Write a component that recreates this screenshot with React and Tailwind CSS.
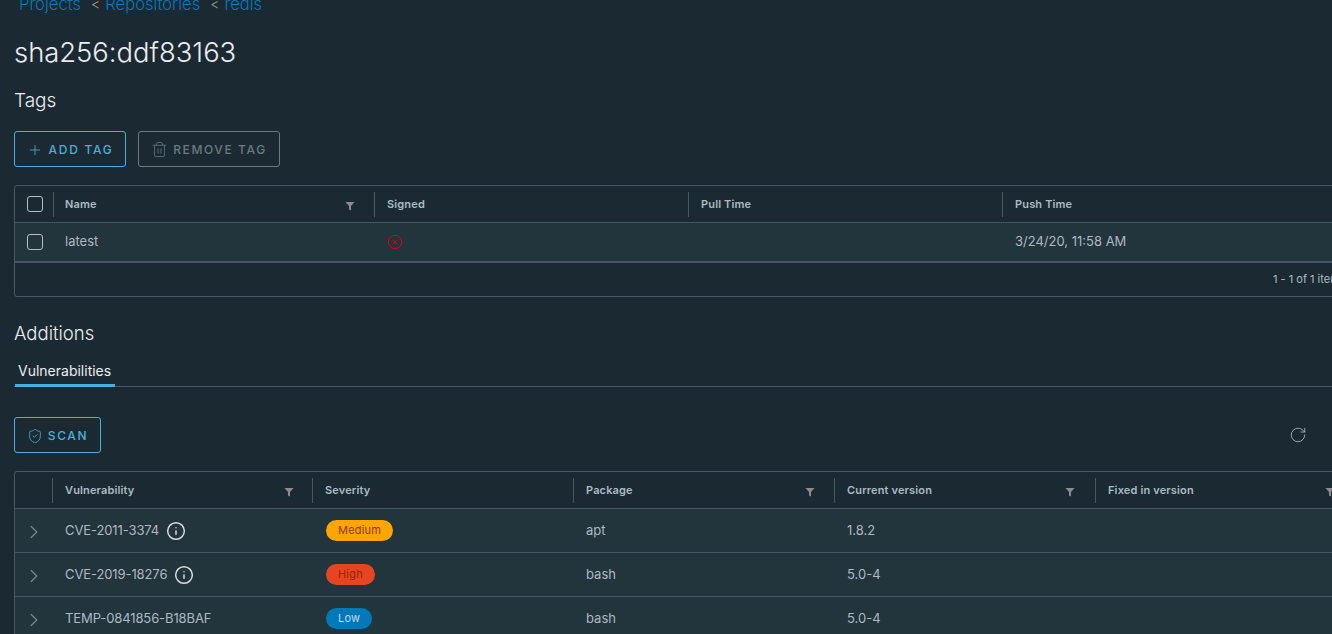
import React from "react";
import { Plus, Trash2, ShieldCheck, RotateCw, Info, CircleX, ChevronRight } from "lucide-react";

const Filter = () => (
  <svg width="10" height="10" viewBox="0 0 10 10" className="shrink-0">
    <path d="M0.5 1h9L6 5v4.5L4 8.5V5z" fill="#8c8c8c" />
  </svg>
);

const Box = () => <span className="block w-4 h-4 rounded-[3px] border border-[#b3bfc6]" />;

const HeadCell = ({ w, label, filter, pad = "pl-[12px] pr-[19px]" }) => (
  <div className={`${w} shrink-0 h-full flex items-center`}>
    <span className="w-px h-[25px] bg-[#485764] shrink-0" />
    <div className={`flex-1 flex items-center justify-between ${pad}`}>
      <span className="text-[11px] font-semibold tracking-[0.15px] text-[#acbac3]">{label}</span>
      {filter && <span className="mt-[3px]"><Filter /></span>}
    </div>
  </div>
);

const Badge = ({ cls, children }) => (
  <span className={`inline-flex items-center h-[21px] px-[12px] rounded-full text-[11px] tracking-[0.2px] ${cls}`}>{children}</span>
);

const vulns = [
  { id: "CVE-2011-3374", info: true, pkg: "apt", ver: "1.8.2", sev: "Medium", cls: "bg-[#ffa500] text-[#8a3a00]" },
  { id: "CVE-2019-18276", info: true, pkg: "bash", ver: "5.0-4", sev: "High", cls: "bg-[#e64524] text-[#a32100]" },
  { id: "TEMP-0841856-B18BAF", info: false, pkg: "bash", ver: "5.0-4", sev: "Low", cls: "bg-[#0079b8] text-[#c8dbe6]" },
];

export default function App() {
  return (
    <div className="w-[1332px] h-[634px] overflow-hidden bg-[#1b2a32] pl-[14px] text-[#acbac3]" style={{ fontFamily: "Inter, 'Noto Sans', sans-serif" }}>
      <div className="-mt-[6px] h-[20px] flex items-center pl-[5px] text-[16.6px] font-light leading-[20px]">
        <span className="text-[#0079b8]">Projects</span>
        <span className="ml-[10px] mr-[5px] text-[14px] text-[#8c9ba5]">&lt;</span>
        <span className="text-[#0079b8]">Repositories</span>
        <span className="ml-[10px] mr-[5px] text-[14px] text-[#8c9ba5]">&lt;</span>
        <span className="text-[#0079b8]">redis</span>
      </div>

      <h1 className="mt-[21px] h-[34px] text-[27.4px] leading-[34px] font-light text-[#eaedf0]">sha256:ddf83163</h1>
      <h2 className="mt-[20px] h-[24px] text-[19px] leading-[24px] font-light text-[#eaedf0]">Tags</h2>

      <div className="mt-[18px] flex gap-[12px]">
        <button className="h-[36px] w-[112px] pt-[1px] flex items-center justify-center gap-[6px] rounded-[3px] border border-[#49afd9] text-[#49afd9] text-[12px] font-medium tracking-[1.7px]">
          <Plus size={16} strokeWidth={1.25} />
          ADD TAG
        </button>
        <button className="h-[36px] w-[142px] pt-[1px] flex items-center justify-center gap-[5px] rounded-[3px] border border-[#6a7a81] text-[#6a7a81] text-[12px] font-medium tracking-[1.6px]">
          <Trash2 size={17} strokeWidth={1.1} />
          REMOVE TAG
        </button>
      </div>

      <div className="mt-[18px] w-[1340px] rounded-[3px] border border-[#485764]">
        <div className="h-[37px] flex items-center border-b border-[#485764]">
          <div className="w-[38px] shrink-0 flex justify-center pl-[2px]"><Box /></div>
          <HeadCell w="w-[321px]" label="Name" filter pad="pl-[11px] pr-[19px]" />
          <HeadCell w="w-[314px]" label="Signed" />
          <HeadCell w="w-[314px]" label="Pull Time" />
          <HeadCell w="w-[330px]" label="Push Time" />
        </div>
        <div className="h-[40px] flex items-center bg-[#22343c] border-b-2 border-[#485764] text-[13px]">
          <div className="w-[38px] shrink-0 flex justify-center pl-[2px]"><Box /></div>
          <div className="w-[321px] shrink-0 pl-[12px]">latest</div>
          <div className="w-[314px] shrink-0 pl-[13px]"><CircleX size={16} strokeWidth={1.5} className="text-[#e1000f]" /></div>
          <div className="w-[314px] shrink-0" />
          <div className="pl-[13px]">3/24/20, 11:58 AM</div>
        </div>
        <div className="h-[33px] flex items-center pl-[1258px] text-[11px] whitespace-nowrap">1 - 1 of 1 items</div>
      </div>

      <h2 className="mt-[24px] h-[24px] text-[18.5px] leading-[24px] font-light text-[#eaedf0]">Additions</h2>

      <div className="mt-[15px] w-[1318px] h-[27px] border-b border-[#485764] flex items-stretch">
        <div className="ml-[1px] w-[100px] h-[27px] border-b-[3px] border-[#49afd9] pl-[3px] text-[14px] leading-[22px] text-[#eaedf0]">Vulnerabilities</div>
      </div>

      <div className="mt-[30px] h-[36px] w-[1318px] flex items-center justify-between pr-[25px]">
        <button className="h-[36px] w-[87px] pt-[1px] flex items-center justify-center gap-[5px] rounded-[3px] border border-[#49afd9] text-[#49afd9] text-[12px] font-medium tracking-[1.6px]">
          <ShieldCheck size={16} strokeWidth={1.25} />
          SCAN
        </button>
        <RotateCw size={18} strokeWidth={1.1} className="text-[#b3bfc6]" />
      </div>

      <div className="mt-[18px] w-[1340px] rounded-[3px] border border-[#485764]">
        <div className="h-[37px] flex items-center border-b border-[#485764]">
          <div className="w-[37px] shrink-0" />
          <HeadCell w="w-[260px]" label="Vulnerability" filter pad="pl-[12px] pr-[18px]" />
          <HeadCell w="w-[261px]" label="Severity" filter={false} />
          <HeadCell w="w-[261px]" label="Package" filter />
          <HeadCell w="w-[261px]" label="Current version" filter pad="pl-[12px] pr-[20px]" />
          <HeadCell w="w-[259px]" label="Fixed in version" filter />
        </div>
        {vulns.map((v) => (
          <div key={v.id} className="h-[44px] flex items-center bg-[#22343c] border-b border-[#485764] text-[13px]">
            <div className="w-[37px] shrink-0 flex justify-center pt-[2px]"><ChevronRight size={22} strokeWidth={1.4} className="text-[#76858e]" /></div>
            <div className="w-[260px] shrink-0 pl-[13px] flex items-center gap-[7px]">
              <span className="tracking-[-0.1px]">{v.id}</span>
              {v.info && <Info size={20} strokeWidth={1.8} className="text-[#d6dde2]" />}
            </div>
            <div className="w-[261px] shrink-0 pl-[14px]"><Badge cls={v.cls}>{v.sev}</Badge></div>
            <div className="w-[261px] shrink-0 pl-[13px]">{v.pkg}</div>
            <div className="w-[261px] shrink-0 pl-[13px]">{v.ver}</div>
          </div>
        ))}
      </div>
    </div>
  );
}
